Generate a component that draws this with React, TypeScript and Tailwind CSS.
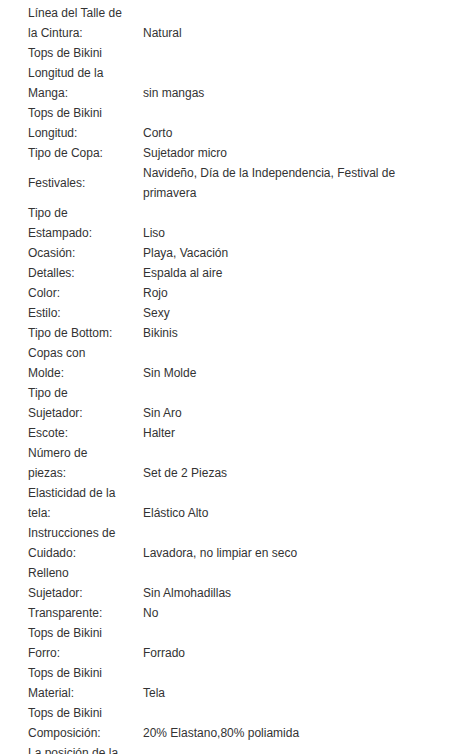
import React from 'react';

type Row = { label: string; value: string; center?: boolean };

const rows: Row[] = [
  { label: 'Línea del Talle de la Cintura:', value: 'Natural' },
  { label: 'Tops de Bikini Longitud de la Manga:', value: 'sin mangas' },
  { label: 'Tops de Bikini Longitud:', value: 'Corto' },
  { label: 'Tipo de Copa:', value: 'Sujetador micro' },
  { label: 'Festivales:', value: 'Navideño, Día de la Independencia, Festival de primavera', center: true },
  { label: 'Tipo de Estampado:', value: 'Liso' },
  { label: 'Ocasión:', value: 'Playa, Vacación' },
  { label: 'Detalles:', value: 'Espalda al aire' },
  { label: 'Color:', value: 'Rojo' },
  { label: 'Estilo:', value: 'Sexy' },
  { label: 'Tipo de Bottom:', value: 'Bikinis' },
  { label: 'Copas con Molde:', value: 'Sin Molde' },
  { label: 'Tipo de Sujetador:', value: 'Sin Aro' },
  { label: 'Escote:', value: 'Halter' },
  { label: 'Número de piezas:', value: 'Set de 2 Piezas' },
  { label: 'Elasticidad de la tela:', value: 'Elástico Alto' },
  { label: 'Instrucciones de Cuidado:', value: 'Lavadora, no limpiar en seco' },
  { label: 'Relleno Sujetador:', value: 'Sin Almohadillas' },
  { label: 'Transparente:', value: 'No' },
  { label: 'Tops de Bikini Forro:', value: 'Forrado' },
  { label: 'Tops de Bikini Material:', value: 'Tela' },
  { label: 'Tops de Bikini Composición:', value: '20% Elastano,80% poliamida' },
  { label: 'La posición de la Cintura:', value: 'Cintura alta' },
];

export default function App() {
  return (
    <div className="min-h-screen bg-white pt-[3px] pl-[28px] font-['Liberation_Sans',Arial,sans-serif] text-[12px] leading-[20px] text-[#333]">
      {rows.map((row) => (
        <div key={row.label} className={`flex ${row.center ? 'items-center' : 'items-end'}`}>
          <div className="w-[95px] mr-[20px] shrink-0">{row.label}</div>
          <div className="w-[280px]">{row.value}</div>
        </div>
      ))}
    </div>
  );
}
